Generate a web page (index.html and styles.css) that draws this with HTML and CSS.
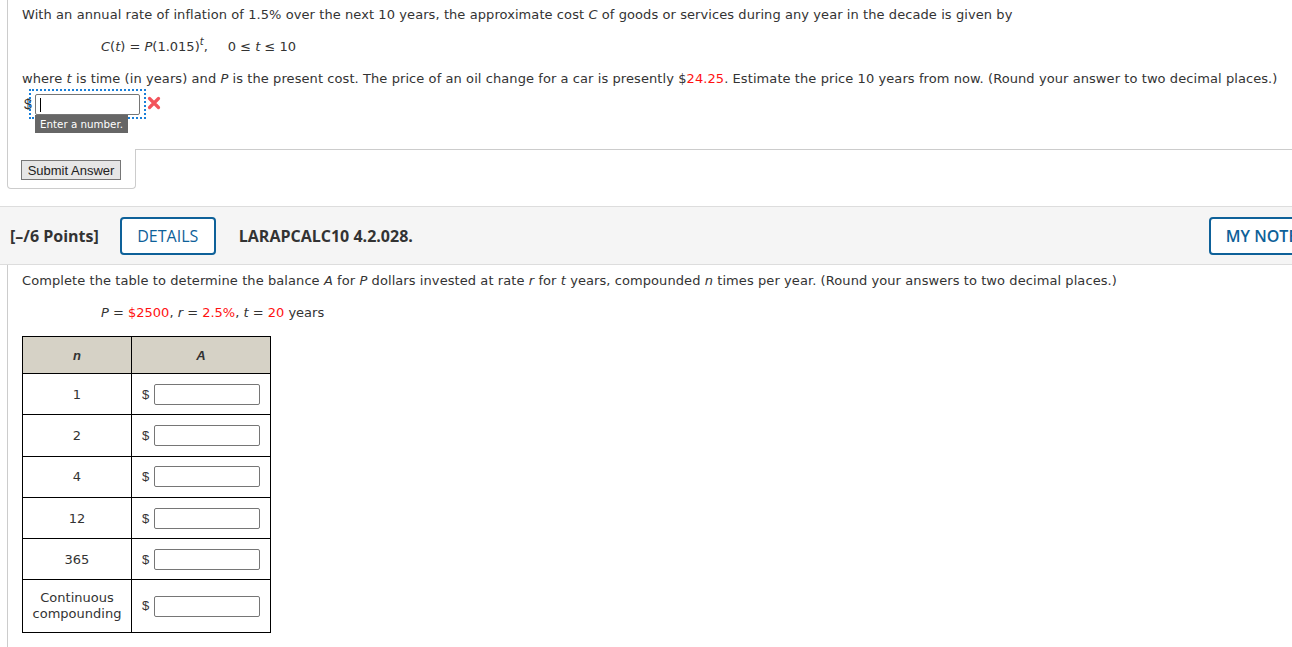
FILE: index.html
```html
<!DOCTYPE html>
<html>
<head>
<meta charset="utf-8">
<link rel="stylesheet" href="styles.css">
</head>
<body>
<section class="q1">
  <div class="q1-body">
    <p class="line">With an annual rate of inflation of 1.5% over the next 10 years, the approximate cost <i>C</i> of goods or services during any year in the decade is given by</p>
    <p class="formula"><i>C</i>(<i>t</i>) = <i>P</i>(1.015)<sup><i>t</i></sup>,<span class="sp"></span>0 ≤ <i>t</i> ≤ 10</p>
    <p class="line">where <i>t</i> is time (in years) and <i>P</i> is the present cost. The price of an oil change for a car is presently $<span class="red">24.25</span>. Estimate the price 10 years from now. (Round your answer to two decimal places.)</p>
    <div class="answer">
      <span class="dollar">$</span>
      <span class="focus"><span class="input"><span class="caret"></span></span></span>
      <svg class="xmark" width="14" height="14" viewBox="0 0 14 14"><path d="M2.5 2.5 L11.5 11.5 M11.5 2.5 L2.5 11.5" stroke="#f2545b" stroke-width="3.2" stroke-linecap="round"/></svg>
      <span class="tip">Enter a number.</span>
    </div>
  </div>
  <div class="q1-foot">
    <div class="tab"><button class="submit">Submit Answer</button></div>
    <div class="rule"></div>
  </div>
</section>

<header class="qhead">
  <span class="pts">[–/6 Points]</span>
  <span class="btn details">DETAILS</span>
  <span class="code">LARAPCALC10 4.2.028.</span>
  <span class="btn notes">MY NOTES</span>
</header>

<section class="q2">
  <p class="line">Complete the table to determine the balance <i>A</i> for <i>P</i> dollars invested at rate <i>r</i> for <i>t</i> years, compounded <i>n</i> times per year. (Round your answers to two decimal places.)</p>
  <p class="formula"><i>P</i> = <span class="red">$2500</span>, <i>r</i> = <span class="red">2.5%</span>, <i>t</i> = <span class="red">20</span> years</p>
  <table class="tbl">
    <thead><tr><th class="cn"><i>n</i></th><th class="ca"><i>A</i></th></tr></thead>
    <tbody>
      <tr><td class="cn">1</td><td class="ca"><span class="d">$</span><span class="box"></span></td></tr>
      <tr><td class="cn">2</td><td class="ca"><span class="d">$</span><span class="box"></span></td></tr>
      <tr><td class="cn">4</td><td class="ca"><span class="d">$</span><span class="box"></span></td></tr>
      <tr><td class="cn">12</td><td class="ca"><span class="d">$</span><span class="box"></span></td></tr>
      <tr><td class="cn">365</td><td class="ca"><span class="d">$</span><span class="box"></span></td></tr>
      <tr class="tall"><td class="cn">Continuous<br>compounding</td><td class="ca"><span class="d">$</span><span class="box"></span></td></tr>
    </tbody>
  </table>
</section>
</body>
</html>
```

FILE: styles.css
```css
html, body {
  margin: 0;
  padding: 0;
  overflow: hidden;
  background: #fff;
}
body {
  font-family: "DejaVu Sans", Verdana, sans-serif;
  font-size: 13px;
  color: #333;
}
p { margin: 0; }
.red { color: #f11; }

.q1 {
  margin-left: 7px;
}
.q1-body {
  border-left: 1px solid #ccc;
  padding: 7px 0 0 14px;
  height: 149px;
  box-sizing: border-box;
  position: relative;
}
.line {
  line-height: 16px;
  white-space: nowrap;
  letter-spacing: 0.08px;
}
.formula {
  line-height: 16px;
  padding: 16px 0 16px 79px;
  white-space: nowrap;
}
.formula sup {
  font-size: 10px;
  line-height: 0;
  position: relative;
  top: -1px;
}
.sp { display: inline-block; width: 20px; }

.answer {
  position: relative;
  height: 40px;
}
.dollar {
  position: absolute;
  left: 2px;
  top: 9px;
  font-family: "Liberation Sans", Arial, sans-serif;
  font-size: 14px;
}
.focus {
  position: absolute;
  left: 7px;
  top: 2px;
  width: 113px;
  height: 26px;
  border: 2px dotted #1a7fd8;
}
.input {
  position: absolute;
  left: 4px;
  top: 3px;
  width: 103px;
  height: 19px;
  border: 1px solid #767676;
  border-radius: 2px;
  background: #fff;
}
.caret {
  position: absolute;
  left: 4px;
  top: 3px;
  width: 1px;
  height: 14px;
  background: #000;
}
.xmark {
  position: absolute;
  left: 125px;
  top: 9px;
}
.tip {
  position: absolute;
  left: 13px;
  top: 28px;
  background: #666;
  color: #fff;
  font-size: 10.3px;
  line-height: 18px;
  padding: 0 5px;
  white-space: nowrap;
}

.q1-foot {
  display: flex;
  height: 40px;
}
.tab {
  width: 129px;
  border: 1px solid #ccc;
  border-top: none;
  border-radius: 0 0 4px 4px;
  padding: 11px 0 0 13px;
  box-sizing: border-box;
}
.rule {
  flex: 1;
  border-top: 1px solid #ccc;
}
.submit {
  font-family: "Liberation Sans", Arial, sans-serif;
  font-size: 13px;
  color: #222;
  background: #e6e6e6;
  border: 1px solid #767676;
  border-radius: 0;
  padding: 0 4px;
  height: 20px;
  width: 100px;
  margin: 0;
}

.qhead {
  margin-top: 17px;
  height: 59px;
  box-sizing: border-box;
  background: #f5f5f5;
  border-top: 1px solid #ddd;
  border-bottom: 1px solid #ddd;
  display: flex;
  align-items: center;
  padding-left: 10px;
  font-family: "Open Sans", sans-serif;
  font-size: 16px;
  white-space: nowrap;
  overflow: hidden;
}
.pts {
  font-weight: 700;
  color: #333;
}
.btn {
  display: inline-flex;
  align-items: center;
  justify-content: center;
  height: 38px;
  box-sizing: border-box;
  border: 2px solid #0e6199;
  border-radius: 4px;
  color: #0e6199;
  background: #fff;
  flex: none;
}
.details {
  margin-left: 21px;
  width: 96px;
}
.code {
  margin-left: 23px;
  font-weight: 700;
  color: #333;
}
.notes {
  margin-left: auto;
  margin-right: -31px;
  width: 114px;
  font-weight: 600;
}

.q2 {
  margin-left: 7px;
  border-left: 1px solid #ccc;
  padding: 8px 0 0 14px;
  height: 400px;
}
.q2 .formula {
  padding: 16px 0 15px 79px;
}
.tbl {
  border-collapse: collapse;
  font-size: 13px;
}
.tbl th, .tbl td {
  border: 1px solid #000;
  text-align: center;
  padding: 0;
}
.tbl th {
  background: #d6d2c6;
  height: 36px;
  font-family: "Liberation Sans", Arial, sans-serif;
  font-weight: 700;
  font-size: 13px;
  color: #333;
}
.cn { width: 108px; }
.ca { width: 138px; }
.tbl td { height: 40.3px; }
.tbl tr.tall td { height: 52px; line-height: 16px; }
.tbl td.ca {
  text-align: left;
}
.d {
  font-family: "Liberation Sans", Arial, sans-serif;
  font-size: 13px;
  display: inline-block;
  margin-left: 10px;
  width: 12px;
  vertical-align: middle;
}
.box {
  display: inline-block;
  vertical-align: middle;
  width: 104px;
  height: 19px;
  border: 1px solid #767676;
  border-radius: 2px;
}
```
